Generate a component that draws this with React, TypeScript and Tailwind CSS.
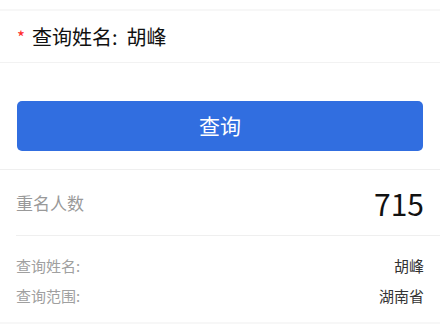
const FONT = { fontFamily: '"Noto Sans CJK SC", "Noto Sans", sans-serif' };

export default function App() {
  return (
    <div className="w-[440px] h-[332px] bg-white overflow-hidden" style={FONT}>
      <div className="h-[9px]" />
      <div className="h-[2px] bg-[#f7f7f7]" />
      <div className="h-[52px] flex items-center pl-[17px] pr-4 border-b border-[#f2f2f2]">
        <span className="text-[#ff2a2a] text-[17px] w-[15px] leading-none">*</span>
        <span className="text-[20px] text-[#111]">查询姓名:&nbsp;&nbsp;胡峰</span>
      </div>
      <div className="pt-[38px] pb-[18px] px-[17px]">
        <button className="w-full h-[50px] rounded-[5px] bg-[#316ee0] text-white text-[21px] flex items-center justify-center">
          查询
        </button>
      </div>
      <div className="border-t border-[#efefef]">
        <div className="ml-4 h-[66px] flex items-center justify-between pr-4 border-b border-[#efefef]">
          <span className="text-[17px] text-[#999]">重名人数</span>
          <span className="text-[30px] text-[#111] leading-none">715</span>
        </div>
        <div className="px-4 pt-[15px] pb-[11px] text-[15px]">
          <div className="h-[30px] flex items-center justify-between">
            <span className="text-[#a0a0a0]">查询姓名:</span>
            <span className="text-[#333]">胡峰</span>
          </div>
          <div className="h-[30px] flex items-center justify-between">
            <span className="text-[#a0a0a0]">查询范围:</span>
            <span className="text-[#333]">湖南省</span>
          </div>
        </div>
        <div className="h-[2px] bg-[#f7f7f7]" />
      </div>
    </div>
  );
}
